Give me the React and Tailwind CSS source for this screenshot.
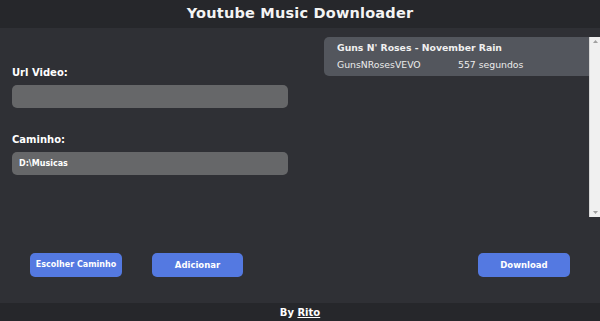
import React from 'react';

function App() {
  const font = { fontFamily: '"DejaVu Sans", Verdana, sans-serif' };

  return (
    <div className="w-[600px] h-[321px] flex flex-col bg-[#2f3035] text-white overflow-hidden" style={font}>
      <header className="h-[28px] shrink-0 bg-[#26272b] flex items-center justify-center">
        <h1 className="text-[14.5px] font-bold tracking-[0.2px] text-[#f4f4f4]">Youtube Music Downloader</h1>
      </header>

      <main className="flex-1 flex flex-col">
        <div className="flex">
          <div className="w-[324px] pl-[12px] pt-[40px]">
            <label className="block text-[10px] font-bold leading-none mb-[7px]">Url Video:</label>
            <div className="w-[276px] h-[23px] rounded-[5px] bg-[#666769]"></div>

            <label className="block text-[10px] font-bold leading-none mt-[27px] mb-[7px]">Caminho:</label>
            <div className="w-[276px] h-[23px] rounded-[5px] bg-[#666769] flex items-center px-[7px] text-[8px] font-bold">
              D:\Musicas
            </div>
          </div>

          <div className="flex-1 pt-[9px] flex">
            <div className="flex-1 h-[180px]">
              <div className="h-[39px] rounded-l-[5px] bg-[#53565d] pl-[13px] pt-[5px]">
                <div className="text-[9.3px] font-bold leading-[12px] text-[#f0f0f0]">Guns N' Roses - November Rain</div>
                <div className="flex text-[9.3px] leading-[12px] mt-[5px] text-[#ececec]">
                  <span className="w-[121px]">GunsNRosesVEVO</span>
                  <span>557 segundos</span>
                </div>
              </div>
            </div>
            <div className="w-[11px] h-[180px] bg-[#f0f0f0] border-l border-[#d8d8d8] flex flex-col items-center justify-between py-[3px]">
              <svg width="5" height="3" viewBox="0 0 5 3"><path d="M2.5 0L5 3H0z" fill="#a0a0a0" /></svg>
              <svg width="5" height="3" viewBox="0 0 5 3"><path d="M0 0h5L2.5 3z" fill="#a0a0a0" /></svg>
            </div>
          </div>
        </div>

        <div className="mt-auto mb-[26px] flex items-center pl-[30px] pr-[30px]">
          <button className="w-[92px] h-[24px] rounded-[5px] bg-[#5479e1] text-[8px] font-bold">Escolher Caminho</button>
          <button className="ml-[30px] w-[91px] h-[24px] rounded-[5px] bg-[#5479e1] text-[8.5px] font-bold">Adicionar</button>
          <button className="ml-auto w-[92px] h-[24px] rounded-[5px] bg-[#5479e1] text-[8.5px] font-bold">Download</button>
        </div>
      </main>

      <footer className="h-[18px] shrink-0 bg-[#26272b] flex items-center justify-center">
        <span className="text-[10px] font-bold">
          By <span className="underline">Rito</span>
        </span>
      </footer>
    </div>
  );
}

export default App;
